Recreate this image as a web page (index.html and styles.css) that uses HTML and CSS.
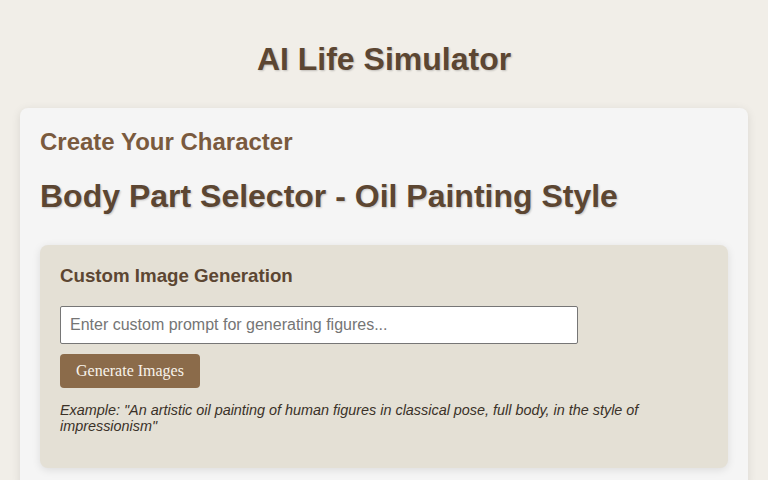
FILE: index.html
```html
<!DOCTYPE html>
<html lang="en">
<head>
<meta charset="utf-8">
<title>AI Life Simulator</title>
<link rel="stylesheet" href="styles.css">
</head>
<body>
<header class="site-header">
  <h1 class="site-title">AI Life Simulator</h1>
</header>
<main class="card">
  <h2 class="card-subtitle">Create Your Character</h2>
  <h1 class="card-title">Body Part Selector - Oil Painting Style</h1>
  <section class="panel">
    <h3 class="panel-title">Custom Image Generation</h3>
    <input class="prompt-input" type="text" placeholder="Enter custom prompt for generating figures...">
    <button class="gen-btn" type="button">Generate Images</button>
    <p class="example">Example: "An artistic oil painting of human figures in classical pose, full body, in the style of impressionism"</p>
  </section>
</main>
</body>
</html>
```
FILE: styles.css
```css
html, body {
  margin: 0;
  padding: 0;
}
body {
  background: #f1eee8;
  font-family: "Liberation Sans", Arial, sans-serif;
  padding: 0 20px;
}
.site-header {
  padding-top: 41px;
  padding-bottom: 30px;
  text-align: center;
}
.site-title {
  margin: 0;
  font-size: 32px;
  font-weight: bold;
  color: #5c4632;
  text-shadow: 1px 1px 2px rgba(0, 0, 0, 0.2);
}
.card {
  display: block;
  background: #f5f5f5;
  border-radius: 8px;
  padding: 20px;
  box-shadow: 0 2px 10px rgba(0, 0, 0, 0.1);
}
.card-subtitle {
  margin: 0 0 20px;
  font-size: 24px;
  color: #7a5a3e;
}
.card-title {
  margin: 22px 0 30px;
  font-size: 32px;
  color: #5c4632;
  text-shadow: 1px 1px 2px rgba(0, 0, 0, 0.2);
}
.panel {
  background: #e4e0d5;
  border-radius: 8px;
  padding: 20px;
  box-shadow: 0 2px 8px rgba(0, 0, 0, 0.1);
}
.panel-title {
  margin: 0 0 19px;
  font-size: 18.72px;
  color: #5c4632;
}
.prompt-input {
  display: block;
  box-sizing: border-box;
  width: 80%;
  height: 38px;
  padding: 9px 9px;
  border: 1px solid #767676;
  border-radius: 2px;
  background: #ffffff;
  font-family: "Liberation Sans", Arial, sans-serif;
  font-size: 16px;
  color: #333333;
}
.prompt-input::placeholder {
  color: #757575;
}
.gen-btn {
  display: block;
  margin-top: 10px;
  height: 34px;
  padding: 0 16px;
  border: none;
  border-radius: 4px;
  background: #8b6b4a;
  color: #f8f3ea;
  font-family: "Liberation Serif", "Times New Roman", serif;
  font-size: 16px;
  cursor: pointer;
}
.example {
  margin: 14px 0 14px;
  font-size: 14.4px;
  font-style: italic;
  color: #3a3128;
}
```
